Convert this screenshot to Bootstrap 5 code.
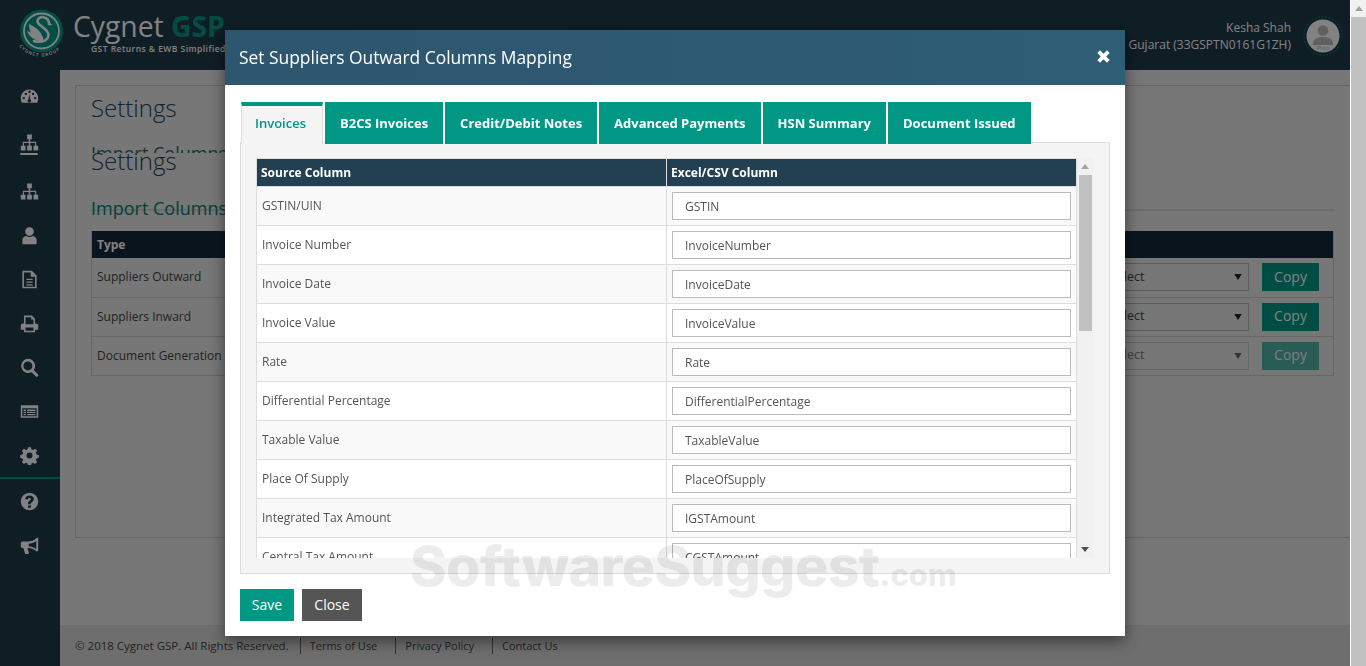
<!DOCTYPE html>
<html lang="en">
<head>
<meta charset="utf-8">
<title>Cygnet GSP</title>
<link rel="stylesheet" href="https://cdn.jsdelivr.net/npm/bootstrap@5.3.0/dist/css/bootstrap.min.css">
<style>
html,body{height:666px;overflow:hidden}
body{font-family:"Open Sans","Liberation Sans",sans-serif;font-size:12px;color:#444;background:#fff}
.app-shell{height:666px;width:1366px}
.page-col{width:1350px}
.top-bar{height:70px;background:#1f3a49;color:#fff}
.logo-svg{width:50px;height:62px;margin:5px 0 0 16px;overflow:visible}
.brand-name{font-size:28.300px;line-height:34px;margin-top:9px;color:#fff;font-weight:400}
.brand-name b{color:#009885;font-weight:700}
.brand-tag{font-size:8.500px;letter-spacing:.45px;line-height:12px;margin-left:18px;color:#fff;font-weight:600;white-space:nowrap}
.brand-box{margin-left:7px}
.user-box{text-align:right;color:#fff;margin-top:19px;font-size:12px;line-height:17px}
.avatar-svg{width:40px;height:40px;margin:16px 7px 0 12px}
.side-bar{width:60px;background:#1f3a49;padding-top:4px}
.side-ico{height:44px;width:60px;display:flex;align-items:center;justify-content:center;padding-right:2px}
.side-ico svg{width:19px;height:19px;fill:#fff}
.side-ico.side-tall{height:51px;justify-content:flex-start;padding-top:15px}
.side-line{display:block;width:18px;height:2px;background:#fff;margin:1px 0 0;border-radius:1px}
.side-sep{border-top:2px solid #009885;margin:0;opacity:1}
.work-area{background:#e7e9e7}
.set-panel{margin:15px 0 0 15px;height:453px;border:1px solid #c8c8c8;border-right:0;padding:7px 15px 0 15px}
.set-title{font-size:24px;font-weight:300;line-height:30px;color:#26435a;margin:0}
.ghost-line{height:7px;overflow:hidden;margin:23px 0 -7px;font-size:18px;line-height:14px;color:#2a6b66}
.sub-title{font-size:18px;color:#00806f;line-height:22px;margin:21px 0 0;border-bottom:2px solid #d4d4d4;height:14px}
.bg-table{width:1243px;margin:20px 0 0;--bs-table-bg:transparent;--bs-table-border-color:#c8c8c8;font-size:12px;color:#444;border-left:1px solid #c8c8c8;border-right:1px solid #c8c8c8}
.bg-table th{background:#13293a;color:#fff;height:27px;padding:0 5px;vertical-align:middle;border:0;font-weight:700;--bs-table-color-state:#fff;--bs-table-bg-state:#13293a}
.bg-table td{height:39px;padding:0 5px;vertical-align:middle;--bs-table-color-state:#444}
.bg-select{width:154px;height:28px;padding:0 14px;font-size:12.500px;border-radius:0;border-color:#b4b4b4;background-color:transparent;color:#444;background-image:url("data:image/svg+xml,%3Csvg xmlns='http://www.w3.org/2000/svg' viewBox='0 0 10 8'%3E%3Cpath d='M0 0h10L5 8z' fill='%23222'/%3E%3C/svg%3E");background-size:8px 6px;background-position:right 6px center}
.bg-select:disabled{background-color:transparent;opacity:.65}
.bg-copy{width:57px;height:28px;padding:0 0 2px;border-radius:0;background:#009885;border:0;color:#fff;font-size:14px;margin:0 9px 0 13px}
.bg-copy:disabled{background:#009885;color:#fff;opacity:.65}
.foot-bar{height:41px;background:#d8d8d8;font-size:11px;padding:13px 0 0 15px;color:#444;line-height:16px}
.foot-bar span{padding:0 18px 0 9px;border-left:1px solid #666;display:inline-block}
.foot-bar .foot-first{border:0;padding:0 11px 0 0;font-size:11.500px}
.fake-scroll{width:16px;background:#fff;border-left:1px solid #fff}
.page-bar{background:#c1c1c1;width:15px;height:666px}
.tri-up{width:0;height:0;border-left:4px solid transparent;border-right:4px solid transparent;border-bottom:5px solid #a3a3a3;margin:0 auto}
.tri-dn{width:0;height:0;border-left:4px solid transparent;border-right:4px solid transparent;border-top:5px solid #505050;margin:0 auto}
.page-top{background:#f1f1f1;height:17px;padding-top:6px}
.modal-backdrop.shade{width:1350px;opacity:.49}
.modal.map-modal{width:1350px;display:block;overflow:hidden}
.map-modal .modal-dialog{max-width:900px;margin:30px auto 0}
.map-modal .modal-content{border:0;border-radius:0;height:606px;box-shadow:0 5px 15px rgba(0,0,0,.5);display:block}
.map-head{height:55px;background:linear-gradient(90deg,#2e566e,#2e5d76);padding:0 15px 2px 14px;border:0;border-radius:0}
.map-head .modal-title{font-size:17.400px;color:#fff;font-weight:400;line-height:26px}
.x-btn{background:none;border:0;padding:0;width:13px;height:13px;line-height:0}
.x-btn svg{width:13px;height:13px;fill:#fff}
.map-body{padding:17px 15px 0}
.map-tabs{border:0;gap:2px;height:42px;padding-left:1px;position:relative;z-index:1}
.map-tabs .nav-link{height:42px;margin:0;border:0;border-radius:0;background:#009885;color:#fff;font-weight:700;font-size:13px;padding:0 15px;line-height:42px}
.map-tabs .nav-link.active{background:#f4f4f4;color:#009885;font-weight:600;border-top:4px solid #009885;border-left:1px solid #ddd;border-right:1px solid #ddd;line-height:34px;padding:0 16px 0 13px;height:42px}
.tab-pane-box{background:#f4f4f4;border:1px solid #ddd;height:432px;margin-top:-2px;padding:15px 0 15px 15px}
.scroll-box{width:837px;height:400px;overflow:hidden}
.map-table-wrap{width:821px;height:400px;overflow:hidden}
.map-table{width:821px;table-layout:fixed;margin:0;font-size:12px;--bs-table-border-color:#ddd;--bs-table-striped-bg:#f9f9f9;--bs-table-bg:#fff;--bs-table-color:#555;--bs-table-striped-color:#555}
.map-table th{background:#233f52;--bs-table-bg-state:#233f52;--bs-table-color-state:#fff;color:#fff;height:28px;padding:0 4px;vertical-align:middle;font-weight:700;font-size:12px}
.map-table td{height:39px;padding:0 5px;vertical-align:middle}
.map-input{height:28px;min-height:28px;border-radius:0;border:1px solid #bbb;padding:0 12px;font-size:12px;color:#555;background:#fff}
.inner-bar{width:16px;height:400px;background:#f1f1f1;padding-top:6px}
.inner-thumb{width:13px;height:156px;margin:6px 0 0 2px;background:#c1c1c1}
.inner-bar .tri-dn{margin-top:216px}
.map-foot{padding-top:15px;gap:8px}
.map-save,.map-close{height:32px;border:0;border-radius:0;color:#fff;font-size:14px;padding:0 0 2px}
.map-save{background:#009885;width:54px}
.map-close{background:#545554;width:60px}
.map-save:hover{background:#009885;color:#fff}
.map-close:hover{background:#545554;color:#fff}
.stamp{position:absolute;left:410px;top:533px;z-index:1070;font-family:Inter,"Open Sans",sans-serif;font-weight:800;font-size:55.500px;line-height:66px;letter-spacing:-.6px;color:rgba(0,0,0,.075);white-space:nowrap;pointer-events:none}
.stamp small{font-size:31px;font-weight:800;letter-spacing:0}
</style>
</head>
<body>
<div class="app-shell d-flex">
  <div class="page-col d-flex flex-column">
    <header class="top-bar d-flex flex-shrink-0">
      <svg class="logo-svg" viewBox="0 0 50 62" aria-hidden="true">
        <defs><path id="arc" d="M2 40A28.600 28.600 0 0 0 48 40"/></defs>
        <circle cx="25.500" cy="26" r="21.500" fill="#009885"/>
        <circle cx="25.500" cy="26" r="17.500" fill="none" stroke="#fff" stroke-width="1.800"/>
        <path d="M33 19C33 11 22 10 21.500 16C21 21 32.500 23 32.500 30C32.500 36 24 38 18 36" fill="none" stroke="#fff" stroke-width="2.600" stroke-linecap="round"/>
        <path d="M13 19C17 21 21 23 24 27C26 30 28 33 27 36C20 37 13 32 11 26C13 26.500 14 27 15 28C13.500 25 13 22 13 19z" fill="#fff"/>
        <path d="M33 17l3.500 3-3.500.5z" fill="#fff"/>
        <text font-size="4.500" fill="#fff" letter-spacing="1" font-weight="600"><textPath href="#arc" startOffset="3%">CYGNET GROUP</textPath></text>
      </svg>
      <div class="brand-box">
        <div class="brand-name">Cygnet <b>GSP</b></div>
        <div class="brand-tag">GST Returns &amp; EWB Simplified</div>
      </div>
      <div class="ms-auto user-box">
        <div>Kesha Shah</div>
        <div>Gujarat (33GSPTN0161G1ZH)</div>
      </div>
      <svg class="avatar-svg" viewBox="0 0 40 40" aria-hidden="true">
        <circle cx="20" cy="20" r="19" fill="none" stroke="#009885" stroke-width=".8" stroke-dasharray="2 1.500"/>
        <circle cx="20" cy="20" r="16.500" fill="#fff"/>
        <circle cx="20" cy="14.500" r="5.300" fill="#bdbdbd"/>
        <path d="M10 28c0-5 4-7 10-7s10 2 10 7v1H10z" fill="#bdbdbd"/>
        <text x="20" y="34" font-size="4.400" text-anchor="middle" fill="#aaa">Photo</text>
      </svg>
    </header>
    <div class="d-flex flex-grow-1">
      <nav class="side-bar flex-shrink-0">
        <div class="side-ico"><svg viewBox="0 0 24 24"><path d="M12 3C5.400 3 1 8.300 1 14.500c0 2 .5 3.900 1.300 5.500h19.400c.8-1.600 1.300-3.500 1.300-5.500C23 8.300 18.600 3 12 3zM4.800 15.500a1.500 1.500 0 1 1 0-3 1.500 1.500 0 0 1 0 3zm2.600-5.300a1.500 1.500 0 1 1 0-3 1.500 1.500 0 0 1 0 3zM12 7.500A1.500 1.500 0 1 1 12 4.500a1.500 1.500 0 0 1 0 3zm2 9.800a2.300 2.300 0 0 1-4.300 1.100c-.5-1 0-2.100 1-2.600l1-7 1.300 7c.8.400 1.200 1.500 1 1.500zm2.600-7.100a1.500 1.500 0 1 1 0-3 1.500 1.500 0 0 1 0 3zm2.600 5.300a1.500 1.500 0 1 1 0-3 1.500 1.500 0 0 1 0 3z"/></svg></div>
        <div class="side-ico side-tall flex-column"><svg viewBox="0 0 24 24"><path d="M9 2h6v6h-2v3h7.500v5H23v6h-6v-6h2v-3.400h-6V16h2v6H9v-6h2v-3.400H5V16h2v6H1v-6h2.500v-5H11V8H9z"/></svg><i class="side-line"></i></div>
        <div class="side-ico"><svg viewBox="0 0 24 24"><path d="M9 2h6v6h-2v3h7.500v5H23v6h-6v-6h2v-3.400h-6V16h2v6H9v-6h2v-3.400H5V16h2v6H1v-6h2.500v-5H11V8H9z"/></svg></div>
        <div class="side-ico"><svg viewBox="0 0 24 24"><circle cx="12" cy="7" r="5.500"/><path d="M3 22v-4c0-3.500 2.500-5.500 5-5.500 1 .8 2.400 1.300 4 1.300s3-.5 4-1.300c2.500 0 5 2 5 5.500v4a1 1 0 0 1-1 1H4a1 1 0 0 1-1-1z"/></svg></div>
        <div class="side-ico"><svg viewBox="0 0 24 24"><path fill-rule="evenodd" d="M3 1h12l6 6v16H3zm2 2v18h14V8.500h-5.500V3zM8 11h8v1.600H8zm0 3.500h8v1.600H8zm0 3.500h8v1.600H8z"/></svg></div>
        <div class="side-ico"><svg viewBox="0 0 24 24"><path fill-rule="evenodd" d="M5 2h10l4 4v6h1.500A2.500 2.500 0 0 1 23 14.500V20h-4v3H5v-3H1v-5.500A2.500 2.500 0 0 1 3.500 12H5zm2 2v9h10V7h-3V4zm0 13v4h10v-4z"/></svg></div>
        <div class="side-ico"><svg viewBox="0 0 24 24"><path fill-rule="evenodd" d="M10 1a9 9 0 0 1 7.300 14.300l5.200 5.200a1.900 1.900 0 0 1-2.700 2.700l-5.200-5.200A9 9 0 1 1 10 1zm0 3.300a5.700 5.700 0 1 0 0 11.400 5.700 5.700 0 0 0 0-11.400z"/></svg></div>
        <div class="side-ico"><svg viewBox="0 0 24 24"><path fill-rule="evenodd" d="M1 4h22v16H1zm2 4v10h18V8zm1.500 1.500h3v1.800h-3zm4.500 0h10.500v1.800H9zM4.500 12.200h3V14h-3zm4.500 0h10.500V14H9zM4.500 15h3v1.800h-3zm4.500 0h10.500v1.800H9z"/></svg></div>
        <div class="side-ico"><svg viewBox="0 0 24 24"><path fill-rule="evenodd" d="M10 1h4l.6 3 2.200.9 2.500-1.700 2.700 2.700-1.700 2.500.9 2.200 3 .6v4l-3 .6-.9 2.200 1.700 2.500-2.700 2.700-2.500-1.700-2.200.9-.6 3h-4l-.6-3-2.200-.9-2.500 1.700-2.700-2.700 1.700-2.500-.9-2.200-3-.6v-4l3-.6.900-2.200L2 5.900l2.700-2.700 2.500 1.700L9.400 4zm2 7a4 4 0 1 0 0 8 4 4 0 0 0 0-8z" transform="scale(.96) translate(.5 .5)"/></svg></div>
        <hr class="side-sep">
        <div class="side-ico"><svg viewBox="0 0 24 24"><path fill-rule="evenodd" d="M12 1a11 11 0 1 1 0 22 11 11 0 0 1 0-22zm-1.800 16v3h3.600v-3zM12 4.500c-3 0-5 1.600-5.500 4.200l3.200.9c.3-1.200 1-1.900 2.200-1.900 1.100 0 1.800.6 1.800 1.400 0 .8-.6 1.200-1.500 1.800-1.200.8-2 1.700-2 3.300v1.300h3.500v-.9c0-.7.400-1.100 1.300-1.700 1.300-.9 2.500-2 2.500-4C17.500 6 15 4.500 12 4.500z"/></svg></div>
        <div class="side-ico"><svg viewBox="0 0 24 24"><path fill-rule="evenodd" d="M23 2v17l-2 .6C17 16.500 13 15.500 9.500 15.300l1.800 6.500-1 1H6.500l-2.200-7.800H3a2 2 0 0 1-2-2V9a2 2 0 0 1 2-2h6c5 0 9-1.500 12-4.500zm-2.500 4.600C17.500 8.500 14 9.500 11 9.800v3.300c3 .3 6.500 1.300 9.500 3.300z"/></svg></div>
      </nav>
      <main class="work-area flex-grow-1 d-flex flex-column">
        <section class="set-panel flex-shrink-0">
          <h2 class="set-title">Settings</h2>
          <div class="ghost-line">Import Columns</div>
          <h2 class="set-title">Settings</h2>
          <h3 class="sub-title fw-normal">Import Columns</h3>
          <table class="table bg-table">
            <thead><tr><th>Type</th><th></th></tr></thead>
            <tbody>
              <tr><td>Suppliers Outward</td><td class="text-end"><div class="d-flex justify-content-end align-items-center"><select class="form-select bg-select"><option>Select</option></select><button class="btn bg-copy">Copy</button></div></td></tr>
              <tr><td>Suppliers Inward</td><td class="text-end"><div class="d-flex justify-content-end align-items-center"><select class="form-select bg-select"><option>Select</option></select><button class="btn bg-copy">Copy</button></div></td></tr>
              <tr><td>Document Generation</td><td class="text-end"><div class="d-flex justify-content-end align-items-center"><select class="form-select bg-select" disabled><option>Select</option></select><button class="btn bg-copy" disabled>Copy</button></div></td></tr>
            </tbody>
          </table>
        </section>
        <footer class="foot-bar mt-auto">
          <span class="foot-first">© 2018 Cygnet GSP. All Rights Reserved.</span><span>Terms of Use</span><span>Privacy Policy</span><span>Contact Us</span>
        </footer>
      </main>
    </div>
  </div>
  <div class="fake-scroll flex-shrink-0">
    <div class="page-bar"><div class="page-top"><div class="tri-up"></div></div></div>
  </div>
</div>

<div class="modal-backdrop shade"></div>
<div class="modal map-modal" role="dialog">
  <div class="modal-dialog">
    <div class="modal-content">
      <div class="modal-header map-head">
        <h5 class="modal-title">Set Suppliers Outward Columns Mapping</h5>
        <button class="x-btn ms-auto" type="button" aria-label="Close"><svg viewBox="0 0 13 13"><path d="M3 .3l3.500 3.500L10 .3l2.700 2.700-3.500 3.500 3.500 3.500-2.700 2.700-3.500-3.500L3 12.700.3 10l3.500-3.500L.3 3z"/></svg></button>
      </div>
      <div class="map-body">
        <ul class="nav nav-tabs map-tabs">
          <li class="nav-item"><a class="nav-link active" href="#">Invoices</a></li>
          <li class="nav-item"><a class="nav-link" href="#">B2CS Invoices</a></li>
          <li class="nav-item"><a class="nav-link" href="#">Credit/Debit Notes</a></li>
          <li class="nav-item"><a class="nav-link" href="#">Advanced Payments</a></li>
          <li class="nav-item"><a class="nav-link" href="#">HSN Summary</a></li>
          <li class="nav-item"><a class="nav-link" href="#">Document Issued</a></li>
        </ul>
        <div class="tab-pane-box">
          <div class="scroll-box d-flex">
            <div class="map-table-wrap">
              <table class="table table-bordered table-striped map-table">
                <colgroup><col style="width:410px"><col></colgroup>
                <thead><tr><th>Source Column</th><th>Excel/CSV Column</th></tr></thead>
                <tbody>
                  <tr><td>GSTIN/UIN</td><td><input class="form-control map-input" value="GSTIN"></td></tr>
                  <tr><td>Invoice Number</td><td><input class="form-control map-input" value="InvoiceNumber"></td></tr>
                  <tr><td>Invoice Date</td><td><input class="form-control map-input" value="InvoiceDate"></td></tr>
                  <tr><td>Invoice Value</td><td><input class="form-control map-input" value="InvoiceValue"></td></tr>
                  <tr><td>Rate</td><td><input class="form-control map-input" value="Rate"></td></tr>
                  <tr><td>Differential Percentage</td><td><input class="form-control map-input" value="DifferentialPercentage"></td></tr>
                  <tr><td>Taxable Value</td><td><input class="form-control map-input" value="TaxableValue"></td></tr>
                  <tr><td>Place Of Supply</td><td><input class="form-control map-input" value="PlaceOfSupply"></td></tr>
                  <tr><td>Integrated Tax Amount</td><td><input class="form-control map-input" value="IGSTAmount"></td></tr>
                  <tr><td>Central Tax Amount</td><td><input class="form-control map-input" value="CGSTAmount"></td></tr>
                </tbody>
              </table>
            </div>
            <div class="inner-bar">
              <div class="tri-up"></div>
              <div class="inner-thumb"></div>
              <div class="tri-dn"></div>
            </div>
          </div>
        </div>
        <div class="d-flex map-foot">
          <button class="btn map-save" type="button">Save</button>
          <button class="btn map-close" type="button">Close</button>
        </div>
      </div>
    </div>
  </div>
</div>
<div class="stamp">SoftwareSuggest<small>.com</small></div>
<script src="https://cdn.jsdelivr.net/npm/bootstrap@5.3.0/dist/js/bootstrap.bundle.min.js"></script>
</body>
</html>
